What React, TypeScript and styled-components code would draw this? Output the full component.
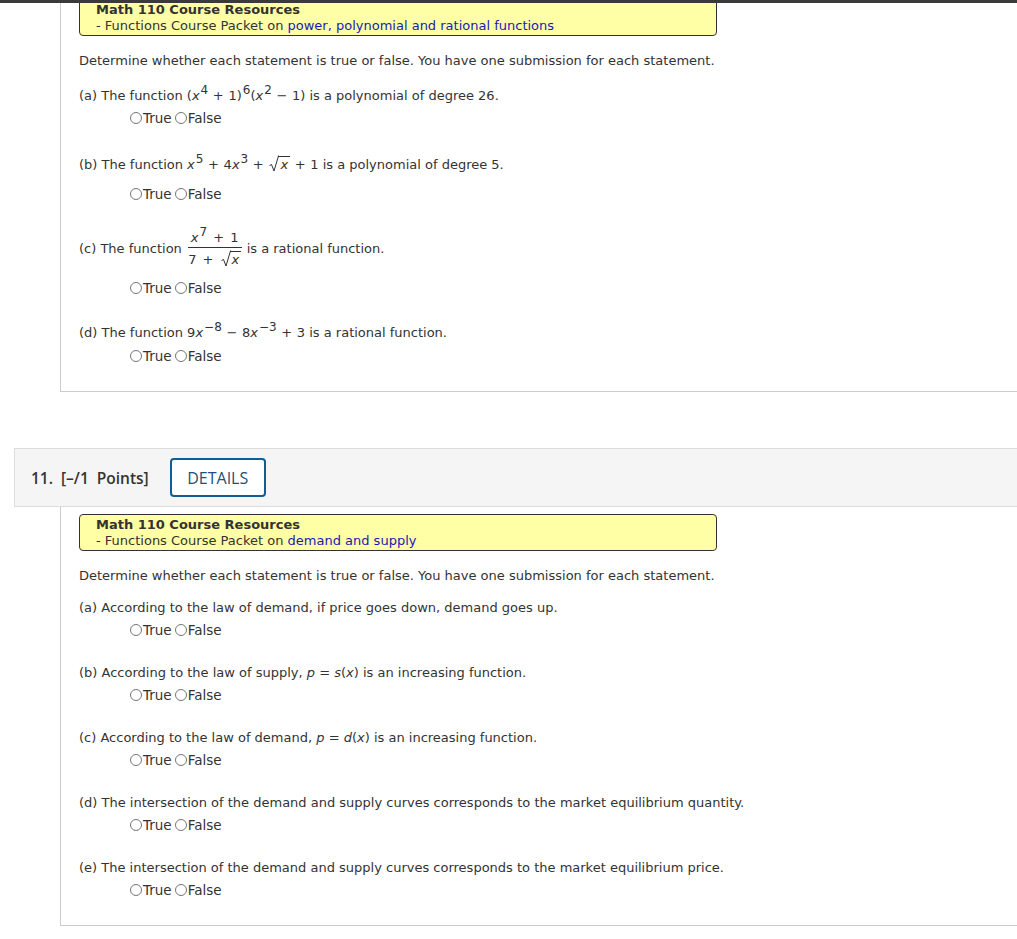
import React from "react";
import styled, { createGlobalStyle } from "styled-components";

const GlobalStyle = createGlobalStyle`
  html, body {
    margin: 0;
    padding: 0;
    background: #ffffff;
    overflow-x: hidden;
  }
  body {
    font-family: "DejaVu Sans", Verdana, sans-serif;
    font-size: 13px;
    color: #333333;
  }
`;

const TopBar = styled.div`
  position: fixed;
  top: 0;
  left: 0;
  right: 0;
  height: 3px;
  background: #3a3a3a;
  z-index: 5;
`;

const Page = styled.div`
  display: flex;
  flex-direction: column;
`;

const Card = styled.div<{ $top: number; $bottom: number }>`
  margin-left: 60px;
  border-left: 1px solid #cccccc;
  border-bottom: 1px solid #cccccc;
  padding: ${p => p.$top}px 0 ${p => p.$bottom}px 18px;
`;

const Resources = styled.div<{ $shift?: number }>`
  width: 604px;
  margin-top: ${p => p.$shift || 0}px;
  background: #ffffa6;
  border: 1px solid #333333;
  border-radius: 4px;
  padding: 2px 16px 1px;
  line-height: 16px;

  b {
    display: block;
    font-weight: bold;
  }

  a {
    color: #1a1ab3;
    text-decoration: none;
  }
`;

const Intro = styled.p`
  margin: 16px 0 0;
  line-height: 18px;
`;

const Item = styled.div<{ $gap: number }>`
  margin-top: ${p => p.$gap}px;
`;

const Question = styled.div`
  line-height: 20px;
`;

const Choices = styled.div<{ $gap: number }>`
  margin-top: ${p => p.$gap}px;
  padding-left: 51px;
  display: flex;
  align-items: center;
  line-height: 20px;
  font-size: 13.5px;
`;

const Choice = styled.label`
  display: inline-flex;
  align-items: center;
  margin-right: 3px;
`;

const Radio = styled.input`
  appearance: none;
  width: 12px;
  height: 12px;
  margin: 0 1px 0 0;
  border: 1px solid #767676;
  border-radius: 50%;
  background: #fff;
`;

const MathExpr = styled.span`
  word-spacing: 0.5px;
`;

const V = styled.i`
  font-style: italic;
`;

const Sup = styled.sup`
  font-size: 12px;
  line-height: 0;
  vertical-align: 6px;
  margin-left: 1px;
`;

const SqrtWrap = styled.span`
  display: inline-flex;
  align-items: flex-end;
  vertical-align: -3px;
  line-height: 15px;
  margin-left: 1px;
`;

const Radicand = styled.span`
  border-top: 1px solid #333;
  padding: 0 2px 0 2px;
  margin-left: -1px;
  font-style: italic;
`;

const Frac = styled.span`
  display: inline-flex;
  flex-direction: column;
  align-items: center;
  vertical-align: middle;
  margin: 0 5px 0 6px;
  line-height: 16px;
  word-spacing: 2px;
`;

const Num = styled.span`
  padding: 0 3px 1px;
  border-bottom: 1px solid #333;
  align-self: stretch;
  text-align: center;
`;

const Den = styled.span`
  padding-top: 2px;
`;

const Header = styled.div`
  margin-top: 56px;
  margin-left: 14px;
  height: 57px;
  background: #f5f5f5;
  border: 1px solid #dddddd;
  border-right: none;
  display: flex;
  align-items: center;
  padding-left: 16px;
  font-family: "Open Sans", sans-serif;
`;

const Points = styled.span`
  font-size: 15.5px;
  font-weight: 600;
  color: #333333;
  word-spacing: 4px;
  margin-right: 21px;
`;

const DetailsButton = styled.button`
  width: 96px;
  height: 39px;
  border: 2px solid #0e5e94;
  border-radius: 4px;
  background: #ffffff;
  color: #23507a;
  font-family: "Open Sans", sans-serif;
  font-size: 16px;
  padding: 0;
`;

const Sqrt = ({ children }: { children: React.ReactNode }) => (
  <SqrtWrap>
    <svg width="10" height="17" viewBox="0 0 10 17">
      <path d="M0.5 10.5 L2.5 9.5 L5 16 L9.6 0.5" fill="none" stroke="#333" strokeWidth="1" />
    </svg>
    <Radicand>{children}</Radicand>
  </SqrtWrap>
);

const TrueFalse = ({ gap = 3 }: { gap?: number }) => (
  <Choices $gap={gap}>
    <Choice>
      <Radio type="radio" />
      True
    </Choice>
    <Choice>
      <Radio type="radio" />
      False
    </Choice>
  </Choices>
);

const App = () => {
  return (
    <>
      <GlobalStyle />
      <TopBar />
      <Page>
        <Card $top={0} $bottom={25}>
          <Resources $shift={-1}>
            <b>Math 110 Course Resources</b>
            - Functions Course Packet on <a href="#">power, polynomial and rational functions</a>
          </Resources>
          <Intro>Determine whether each statement is true or false. You have one submission for each statement.</Intro>

          <Item $gap={16}>
            <Question>
              (a) The function{" "}
              <MathExpr>
                (<V>x</V><Sup>4</Sup> + 1)<Sup>6</Sup>(<V>x</V><Sup>2</Sup> − 1)
              </MathExpr>{" "}
              is a polynomial of degree 26.
            </Question>
            <TrueFalse gap={2} />
          </Item>

          <Item $gap={27}>
            <Question>
              (b) The function{" "}
              <MathExpr>
                <V>x</V><Sup>5</Sup> + 4<V>x</V><Sup>3</Sup> + <Sqrt>x</Sqrt> + 1
              </MathExpr>{" "}
              is a polynomial of degree 5.
            </Question>
            <TrueFalse gap={9} />
          </Item>

          <Item $gap={26}>
            <Question>
              (c) The function
              <Frac>
                <Num>
                  <V>x</V><Sup>7</Sup> + 1
                </Num>
                <Den>
                  7 + <Sqrt>x</Sqrt>
                </Den>
              </Frac>
              is a rational function.
            </Question>
            <TrueFalse gap={10} />
          </Item>

          <Item $gap={25}>
            <Question>
              (d) The function{" "}
              <MathExpr>
                9<V>x</V><Sup>−8</Sup> − 8<V>x</V><Sup>−3</Sup> + 3
              </MathExpr>{" "}
              is a rational function.
            </Question>
            <TrueFalse />
          </Item>
        </Card>

        <Header>
          <Points>11. [–/1 Points]</Points>
          <DetailsButton>DETAILS</DetailsButton>
        </Header>

        <Card $top={7} $bottom={25}>
          <Resources>
            <b>Math 110 Course Resources</b>
            - Functions Course Packet on <a href="#">demand and supply</a>
          </Resources>
          <Intro>Determine whether each statement is true or false. You have one submission for each statement.</Intro>

          <Item $gap={13}>
            <Question>(a) According to the law of demand, if price goes down, demand goes up.</Question>
            <TrueFalse gap={2} />
          </Item>

          <Item $gap={23}>
            <Question>
              (b) According to the law of supply, <V>p</V> = <V>s</V>(<V>x</V>) is an increasing function.
            </Question>
            <TrueFalse gap={2} />
          </Item>

          <Item $gap={23}>
            <Question>
              (c) According to the law of demand, <V>p</V> = <V>d</V>(<V>x</V>) is an increasing function.
            </Question>
            <TrueFalse gap={2} />
          </Item>

          <Item $gap={23}>
            <Question>(d) The intersection of the demand and supply curves corresponds to the market equilibrium quantity.</Question>
            <TrueFalse gap={2} />
          </Item>

          <Item $gap={23}>
            <Question>(e) The intersection of the demand and supply curves corresponds to the market equilibrium price.</Question>
            <TrueFalse gap={2} />
          </Item>
        </Card>
      </Page>
    </>
  );
};

export default App;
